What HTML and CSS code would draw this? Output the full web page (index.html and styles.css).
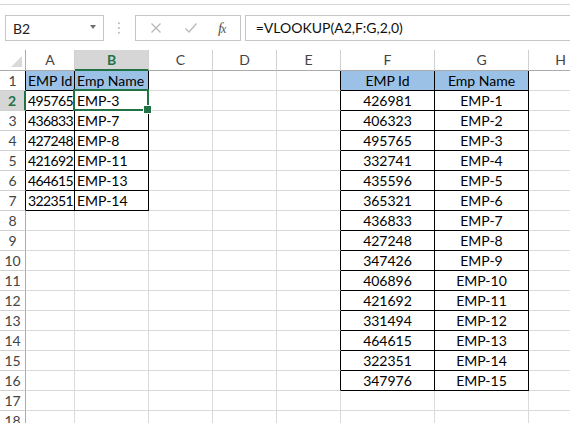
FILE: index.html
```html
<!DOCTYPE html>
<html>
<head>
<meta charset="utf-8">
<link rel="stylesheet" href="styles.css">
</head>
<body>
<div class="app">
  <div class="ribbon"></div>
  <div class="fbar">
    <div class="namebox"><span>B2</span><span class="caret"></span></div>
    <svg class="grip" width="4" height="14" viewBox="0 0 4 14"><circle cx="2" cy="2" r="1" fill="#b5b5b5"/><circle cx="2" cy="7" r="1" fill="#b5b5b5"/><circle cx="2" cy="12" r="1" fill="#b5b5b5"/></svg>
    <div class="btns">
      <svg class="btn" width="12" height="12" viewBox="0 0 12 12"><path d="M1.5 1.5 L10.5 10.5 M10.5 1.5 L1.5 10.5" stroke="#b9b9b9" stroke-width="1.3" fill="none"/></svg>
      <svg class="btn" width="14" height="12" viewBox="0 0 14 12"><path d="M1.5 6.5 L5 10 L12.5 1.5" stroke="#b9b9b9" stroke-width="1.3" fill="none"/></svg>
      <span class="fx">f<span class="fxx">x</span></span>
    </div>
    <div class="formula">=VLOOKUP(A2,F:G,2,0)</div>
  </div>
  <div class="sheet">
    <div class="h corner"><span class="tri"></span></div>
    <div class="h">A</div><div class="h hs">B</div><div class="h">C</div><div class="h">D</div><div class="h">E</div><div class="h">F</div><div class="h">G</div><div class="h">H</div>

    <div class="r tl">1</div><div class="c t blue">EMP Id</div><div class="c t blue">Emp Name</div><div class="c"></div><div class="c"></div><div class="c tl"></div><div class="c t blue ctr">EMP Id</div><div class="c t blue ctr">Emp Name</div><div class="c"></div>

    <div class="r rs">2</div><div class="c t num">495765</div><div class="c t sel">EMP-3</div><div class="c"></div><div class="c"></div><div class="c tl"></div><div class="c t ctr">426981</div><div class="c t ctr">EMP-1</div><div class="c"></div>

    <div class="r tl">3</div><div class="c t num">436833</div><div class="c t">EMP-7</div><div class="c"></div><div class="c"></div><div class="c tl"></div><div class="c t ctr">406323</div><div class="c t ctr">EMP-2</div><div class="c"></div>

    <div class="r tl">4</div><div class="c t num">427248</div><div class="c t">EMP-8</div><div class="c"></div><div class="c"></div><div class="c tl"></div><div class="c t ctr">495765</div><div class="c t ctr">EMP-3</div><div class="c"></div>

    <div class="r tl">5</div><div class="c t num">421692</div><div class="c t">EMP-11</div><div class="c"></div><div class="c"></div><div class="c tl"></div><div class="c t ctr">332741</div><div class="c t ctr">EMP-4</div><div class="c"></div>

    <div class="r tl">6</div><div class="c t num">464615</div><div class="c t">EMP-13</div><div class="c"></div><div class="c"></div><div class="c tl"></div><div class="c t ctr">435596</div><div class="c t ctr">EMP-5</div><div class="c"></div>

    <div class="r tl">7</div><div class="c t num">322351</div><div class="c t">EMP-14</div><div class="c"></div><div class="c"></div><div class="c tl"></div><div class="c t ctr">365321</div><div class="c t ctr">EMP-6</div><div class="c"></div>

    <div class="r">8</div><div class="c"></div><div class="c"></div><div class="c"></div><div class="c"></div><div class="c tl"></div><div class="c t ctr">436833</div><div class="c t ctr">EMP-7</div><div class="c"></div>

    <div class="r">9</div><div class="c"></div><div class="c"></div><div class="c"></div><div class="c"></div><div class="c tl"></div><div class="c t ctr">427248</div><div class="c t ctr">EMP-8</div><div class="c"></div>

    <div class="r">10</div><div class="c"></div><div class="c"></div><div class="c"></div><div class="c"></div><div class="c tl"></div><div class="c t ctr">347426</div><div class="c t ctr">EMP-9</div><div class="c"></div>

    <div class="r">11</div><div class="c"></div><div class="c"></div><div class="c"></div><div class="c"></div><div class="c tl"></div><div class="c t ctr">406896</div><div class="c t ctr">EMP-10</div><div class="c"></div>

    <div class="r">12</div><div class="c"></div><div class="c"></div><div class="c"></div><div class="c"></div><div class="c tl"></div><div class="c t ctr">421692</div><div class="c t ctr">EMP-11</div><div class="c"></div>

    <div class="r">13</div><div class="c"></div><div class="c"></div><div class="c"></div><div class="c"></div><div class="c tl"></div><div class="c t ctr">331494</div><div class="c t ctr">EMP-12</div><div class="c"></div>

    <div class="r">14</div><div class="c"></div><div class="c"></div><div class="c"></div><div class="c"></div><div class="c tl"></div><div class="c t ctr">464615</div><div class="c t ctr">EMP-13</div><div class="c"></div>

    <div class="r">15</div><div class="c"></div><div class="c"></div><div class="c"></div><div class="c"></div><div class="c tl"></div><div class="c t ctr">322351</div><div class="c t ctr">EMP-14</div><div class="c"></div>

    <div class="r">16</div><div class="c"></div><div class="c"></div><div class="c"></div><div class="c"></div><div class="c tl"></div><div class="c t ctr">347976</div><div class="c t ctr">EMP-15</div><div class="c"></div>

    <div class="r">17</div><div class="c"></div><div class="c"></div><div class="c"></div><div class="c"></div><div class="c"></div><div class="c"></div><div class="c"></div><div class="c"></div>

    <div class="r">18</div><div class="c"></div><div class="c"></div><div class="c"></div><div class="c"></div><div class="c"></div><div class="c"></div><div class="c"></div><div class="c"></div>
  </div>
</div>
</body>
</html>
```

FILE: styles.css
```css
* { box-sizing: border-box; }
html, body {
  margin: 0;
  padding: 0;
  background: #fff;
}
body {
  width: 570px;
  height: 423px;
  overflow: hidden;
  font-family: "Lato", "Open Sans", sans-serif;
  font-size: 14px;
  color: #000;
}
.app {
  width: 570px;
  height: 423px;
  overflow: hidden;
}
.ribbon {
  height: 5px;
  border-bottom: 1px solid #d6d6d6;
}
.fbar {
  height: 45px;
  display: flex;
  align-items: flex-start;
  padding: 10px 0 0 5px;
  white-space: nowrap;
}
.namebox {
  width: 103px;
  height: 26px;
  border: 1px solid #c6c6c6;
  display: flex;
  align-items: center;
  justify-content: space-between;
  padding: 0 7px 0 7px;
  color: #222;
}
.caret {
  width: 0;
  height: 0;
  border-left: 3.5px solid transparent;
  border-right: 3.5px solid transparent;
  border-top: 4px solid #6f6f6f;
  margin-bottom: 2px;
}
.grip {
  margin: 6px 0 0 13px;
}
.btns {
  margin-left: 14px;
  width: 110px;
  height: 26px;
  border: 1px solid #c6c6c6;
  display: flex;
  align-items: center;
  padding-left: 14px;
}
.btn:nth-child(1) { margin-right: 22px; }
.btn:nth-child(2) { margin-right: 20px; }
.fx {
  font-family: "Liberation Serif", serif;
  font-style: italic;
  font-size: 15px;
  color: #555;
  letter-spacing: -1px;
}
.fxx {
  font-size: 12px;
}
.formula {
  margin-left: 4px;
  width: 340px;
  height: 26px;
  border: 1px solid #c6c6c6;
  border-right: none;
  padding-left: 10px;
  line-height: 24px;
  color: #111;
}
.sheet {
  display: grid;
  grid-template-columns: 26px 49px 74px 64px 64px 64px 94px 94px 64px;
  grid-template-rows: 21px repeat(18, 20px);
  width: 593px;
}
.h {
  border-right: 1px solid #d0d0d0;
  border-bottom: 1px solid #ababab;
  color: #444;
  text-align: center;
  line-height: 20px;
}
.corner {
  border-right-color: #ababab;
  display: flex;
  align-items: flex-end;
  justify-content: flex-end;
  padding: 0 3px 3px 0;
}
.tri {
  width: 0;
  height: 0;
  border-left: 11px solid transparent;
  border-bottom: 11px solid #d9d9d9;
}
.hs {
  background: #d6d6d6;
  color: #217346;
  font-weight: bold;
  border-bottom: 2px solid #217346;
}
.r {
  border-right: 1px solid #ababab;
  border-bottom: 1px solid #d0d0d0;
  color: #444;
  text-align: center;
  line-height: 20px;
}
.rs {
  background: #d6d6d6;
  color: #217346;
  font-weight: bold;
  border-right: 2px solid #217346;
}
.c {
  border-right: 1px solid #dadada;
  border-bottom: 1px solid #dadada;
  line-height: 20px;
  padding: 0 2px;
  white-space: nowrap;
  overflow: hidden;
}
.r.tl { border-right-color: #000; }
.c.tl { border-right-color: #000; }
.t {
  border-right-color: #000;
  border-bottom-color: #000;
}
.blue { background: #9bc2e6; }
.num {
  text-align: right;
  letter-spacing: -0.6px;
  padding-right: 2px;
}
.ctr { text-align: center; }
.sel {
  position: relative;
  overflow: visible;
}
.sel::after {
  content: "";
  position: absolute;
  left: -2px;
  top: -2px;
  right: -1px;
  bottom: -1px;
  border: 2px solid #217346;
  pointer-events: none;
}
.sel::before {
  content: "";
  position: absolute;
  width: 7px;
  height: 7px;
  right: -4px;
  bottom: -4px;
  background: #217346;
  border: 1px solid #fff;
  z-index: 2;
}
```
